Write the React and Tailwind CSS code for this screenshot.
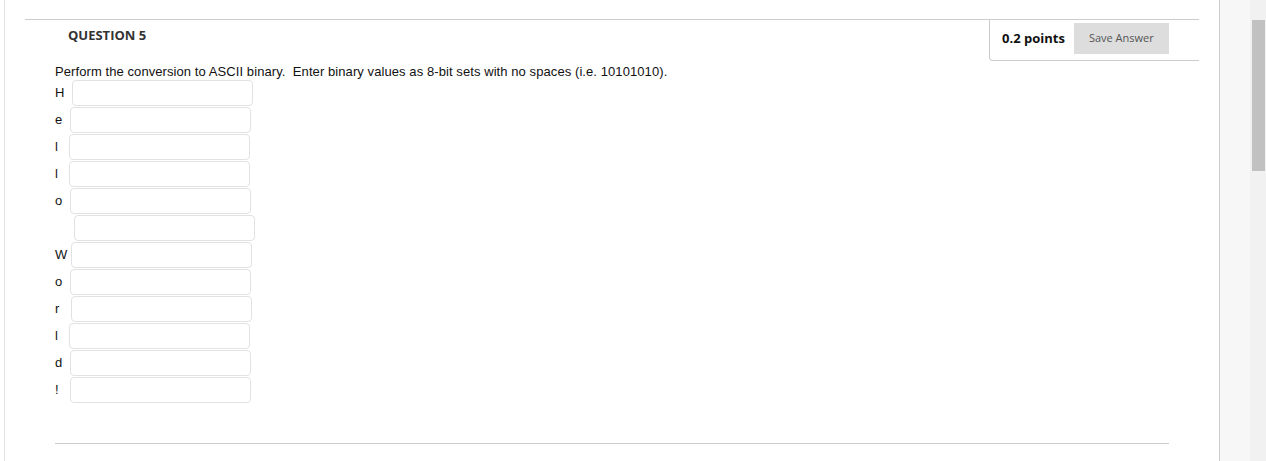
const rows = [
  { c: "H", ml: "ml-[8px]" },
  { c: "e", ml: "ml-[8px]" },
  { c: "l", ml: "ml-[11px]" },
  { c: "l", ml: "ml-[11px]" },
  { c: "o", ml: "ml-[8px]" },
  { c: "\u00a0", ml: "ml-[15px]" },
  { c: "W", ml: "ml-[4px]" },
  { c: "o", ml: "ml-[8px]" },
  { c: "r", ml: "ml-[12px]" },
  { c: "l", ml: "ml-[11px]" },
  { c: "d", ml: "ml-[8px]" },
  { c: "!", ml: "ml-[11px]" },
];

export default function App() {
  return (
    <div className="flex h-[461px] w-[1266px] overflow-hidden bg-white">
      <div className="w-[4px]" />
      <div className="flex-1 border-l border-[#e2e2e2]">
        <div className="mx-[20px] mt-[19px]">
          <div className="flex justify-between border-t border-[#cccccc]">
            <h2 className="ml-[43px] mt-[6px] text-[13px] font-bold text-[#333] uppercase" style={{ fontFamily: '"Open Sans", sans-serif' }}>
              Question 5
            </h2>
            <div className="flex h-[41px] w-[210px] items-center rounded-bl-[4px] border-b border-l border-[#cccccc] pb-[3px] pl-[12px]" style={{ fontFamily: '"Open Sans", sans-serif' }}>
              <span className="text-[13px] font-bold text-[#111]">0.2 points</span>
              <button className="ml-[9px] h-[31px] w-[95px] bg-[#dddddd] text-[11px] text-[#555]">Save Answer</button>
            </div>
          </div>
          <div className="ml-[30px] mt-[3px] text-[13px] text-[#111]" style={{ fontFamily: '"Liberation Sans", Arial, sans-serif' }}>
            <p className="leading-[15px] tracking-[0.08px]">Perform the conversion to ASCII binary.&nbsp; Enter binary values as 8-bit sets with no spaces (i.e. 10101010).</p>
            <div className="mt-[1px] flex flex-col gap-[1px]">
              {rows.map((r, i) => (
                <div key={i} className="flex items-center">
                  <span>{r.c}</span>
                  <input className={`${r.ml} h-[26px] w-[181px] rounded-[4px] border border-[#e2e2e2] bg-white outline-none`} />
                </div>
              ))}
            </div>
            <div className="mr-[30px] mt-[40px] border-t border-[#cccccc]" />
          </div>
        </div>
      </div>
      <div className="w-[31px] border-l border-[#cccccc] bg-[#f7f7f7]" />
      <div className="w-[16px] bg-[#f1f1f1] pt-[20px]">
        <div className="ml-[2px] h-[151px] w-[13px] bg-[#c1c1c1]" />
      </div>
    </div>
  );
}
